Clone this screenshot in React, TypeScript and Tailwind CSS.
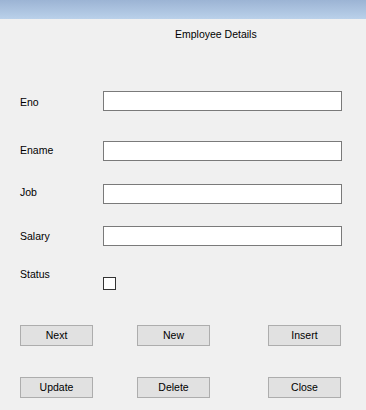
const font = { fontFamily: '"Liberation Sans", Arial, sans-serif' };

type Field = { label: string; gap: string; labelShift: string };

const fields: Field[] = [
  { label: "Eno", gap: "mt-[50px]", labelShift: "mt-[1px]" },
  { label: "Ename", gap: "mt-[30px]", labelShift: "-mt-[3px]" },
  { label: "Job", gap: "mt-[23px]", labelShift: "-mt-[5px]" },
  { label: "Salary", gap: "mt-[22px]", labelShift: "-mt-[1px]" },
];

function FormButton({ text, className }: { text: string; className?: string }) {
  return (
    <button
      className={`w-[73px] h-[21px] border border-[#adadad] bg-[#e1e1e1] text-[10.5px] leading-none text-black ${className ?? ""}`}
    >
      {text}
    </button>
  );
}

export default function App() {
  return (
    <div className="w-[366px] h-[410px] bg-[#f0f0f0] text-black overflow-hidden" style={font}>
      {/* window title bar */}
      <div className="h-[19px] bg-linear-to-b from-[#9cb4d4] to-[#bad1ea]" />

      <div className="mt-[8px] h-[14px] pl-[175px] text-[10.5px] leading-[14px]">Employee Details</div>

      {fields.map((f) => (
        <div key={f.label} className={`flex items-center h-[20px] ${f.gap}`}>
          <span className={`w-[103px] pl-[20px] text-[10.5px] leading-[14px] ${f.labelShift}`}>{f.label}</span>
          <input className="w-[239px] h-[20px] border border-[#7a7a7a] bg-white outline-none" />
        </div>
      ))}

      {/* status checkbox */}
      <div className="flex mt-[21px]">
        <span className="w-[103px] pl-[20px] text-[10.5px] leading-[14px]">Status</span>
        <div className="mt-[10px] w-[13px] h-[13px] border border-[#333333] bg-white" />
      </div>

      <div className="flex pl-[20px] mt-[35px]">
        <FormButton text="Next" />
        <FormButton text="New" className="ml-[44px]" />
        <FormButton text="Insert" className="ml-[58px]" />
      </div>
      <div className="flex pl-[20px] mt-[31px]">
        <FormButton text="Update" />
        <FormButton text="Delete" className="ml-[44px]" />
        <FormButton text="Close" className="ml-[58px]" />
      </div>
    </div>
  );
}
